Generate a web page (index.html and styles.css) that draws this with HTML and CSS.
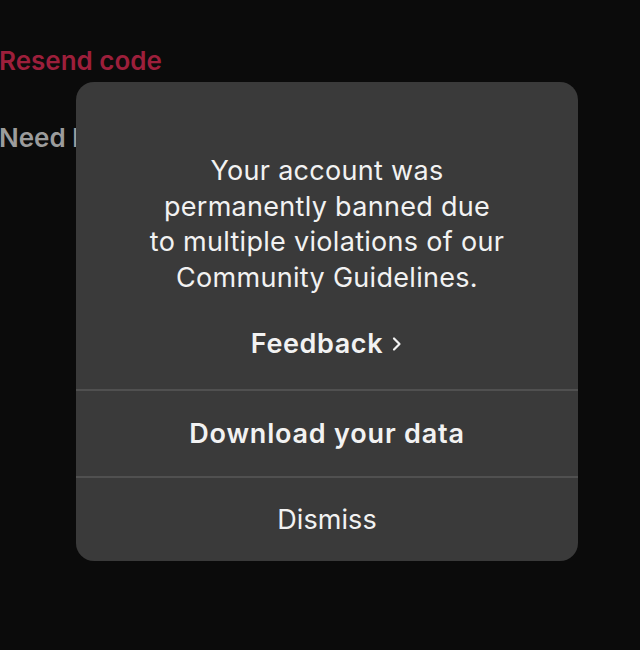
FILE: index.html
```html
<!DOCTYPE html>
<html lang="en">
  <head>
    <meta charset="UTF-8" />
    <meta name="viewport" content="width=device-width, initial-scale=1.0" />
    <title>Account banned</title>
    <link rel="stylesheet" href="styles.css">
  </head>
  <body>
    <div class="screen">
      <p class="resend">Resend code</p>
      <p class="need-help">Need help?</p>
    </div>

    <div class="modal">
      <div class="modal-body">
        <p class="message">
          Your account was<br />
          permanently banned due<br />
          to multiple violations of our<br />
          Community Guidelines.
        </p>
        <a class="feedback" href="#">
          Feedback
          <svg class="chevron" width="12" height="18" viewBox="0 0 12 18">
            <path d="M3 3.5 L8.5 9 L3 14.5" fill="none" stroke="#f2f2f2" stroke-width="2.2" stroke-linecap="round" stroke-linejoin="round" />
          </svg>
        </a>
      </div>
      <button class="modal-btn bold">Download your data</button>
      <button class="modal-btn">Dismiss</button>
    </div>
  </body>
</html>
```

FILE: styles.css
```css
html,
body {
  margin: 0;
  height: 100%;
}
body {
  background: #0b0b0b;
  font-family: Inter, "Noto Sans", sans-serif;
  position: relative;
  overflow: hidden;
}

.screen {
  padding-top: 45px;
}
.screen p {
  margin: 0;
  font-size: 26px;
  line-height: 32px;
  font-weight: 600;
  margin-left: -1px;
}
.resend {
  color: #9d1f3b;
}
.need-help {
  color: #9c9c9c;
  margin-top: 45px !important;
}

/* modal */
.modal {
  position: absolute;
  top: 82px;
  left: 76px;
  width: 502px;
  height: 479px;
  background: #3a3a3a;
  border-radius: 18px;
  display: flex;
  flex-direction: column;
  color: #f2f2f2;
  overflow: hidden;
}
.modal-body {
  height: 307px;
  box-sizing: border-box;
  padding-top: 71px;
  display: flex;
  flex-direction: column;
  align-items: center;
}
.message {
  margin: 0;
  text-align: center;
  font-size: 27px;
  line-height: 35.5px;
  font-weight: 400;
  letter-spacing: 0.3px;
}
.feedback {
  margin-top: 31px;
  color: #f2f2f2;
  text-decoration: none;
  font-size: 27px;
  line-height: 36px;
  font-weight: 600;
  letter-spacing: 0.6px;
  display: flex;
  align-items: center;
  gap: 8px;
}
.chevron {
  display: block;
}

.modal-btn {
  flex: 1;
  border: none;
  border-top: 2px solid #505050;
  background: none;
  color: #f2f2f2;
  font-family: inherit;
  font-size: 27px;
  font-weight: 400;
  letter-spacing: 0.1px;
  padding: 0;
  margin: 0;
}
.modal-btn.bold {
  font-weight: 600;
  letter-spacing: 0.8px;
  flex: none;
  height: 87px;
}
```
